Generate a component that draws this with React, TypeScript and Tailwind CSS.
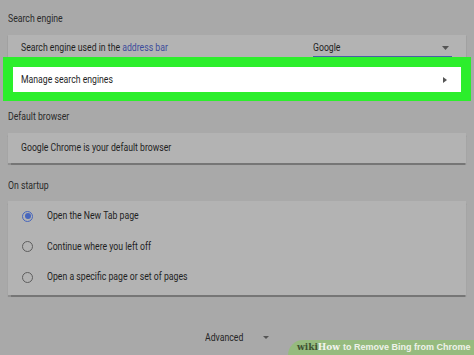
import React from "react";

const T = ({ children, className = "" }: { children: React.ReactNode; className?: string }) => (
  <span className={"inline-block origin-left scale-x-[0.79] whitespace-nowrap " + className}>{children}</span>
);

const Radio = ({ checked }: { checked?: boolean }) =>
  checked ? (
    <span className="flex h-[11px] w-[11px] items-center justify-center rounded-full border-[1.5px] border-[#4766bd]">
      <span className="h-[6px] w-[6px] rounded-full bg-[#4766bd]" />
    </span>
  ) : (
    <span className="h-[11px] w-[11px] rounded-full border-[1.5px] border-[#5e5e5e]" />
  );

export default function App() {
  return (
    <div
      className="relative h-[355px] w-[474px] overflow-hidden bg-[#a9a9a9] text-[11px] leading-[14px] text-[#1f1f1f]"
      style={{ fontFamily: "Roboto, 'Liberation Sans', sans-serif" }}
    >
      <div className="flex flex-col px-[8px] pt-[12px]">
        <div className="h-[14px] text-[#2a2a2a]">
          <T>Search engine</T>
        </div>
        <div className="mt-[9px] flex flex-col bg-[#b3b3b3] shadow-[0_1px_1px_rgba(0,0,0,0.25)]">
          <div className="flex h-[22px] items-stretch pl-[13px] pr-[14px]">
            <div className="flex items-center pt-[4px]">
              <T>
                Search engine used in the <span className="text-[#3d4c9c]">address bar</span>
              </T>
            </div>
            <div className="ml-auto flex w-[139px] items-center border-b border-[#4a5ea8] pt-[4px]">
              <T>Google</T>
              <svg className="ml-auto mr-[3px]" width="7" height="4" viewBox="0 0 7 4">
                <path d="M0 0h7L3.5 4z" fill="#555" />
              </svg>
            </div>
          </div>
          <div className="-mx-[5px] -mb-[4px] border-[10px] border-b-[9px] border-[#2cee2c]">
            <div className="flex h-[25px] items-center bg-white pl-[8px] pr-[14px]">
              <T>Manage search engines</T>
              <svg className="ml-auto" width="4" height="6" viewBox="0 0 4 6">
                <path d="M0 0l4 3-4 3z" fill="#555" />
              </svg>
            </div>
          </div>
        </div>

        <div className="mt-[13px] h-[14px] text-[#2a2a2a]">
          <T>Default browser</T>
        </div>
        <div className="mt-[9px] flex h-[30px] items-center bg-[#b3b3b3] pl-[13px] shadow-[0_1.5px_1px_rgba(0,0,0,0.3)]">
          <T>Google Chrome is your default browser</T>
        </div>

        <div className="mt-[16px] h-[14px] text-[#2a2a2a]">
          <T>On startup</T>
        </div>
        <div className="mt-[8px] flex flex-col bg-[#b3b3b3] pb-[2px] shadow-[0_1.5px_1px_rgba(0,0,0,0.3)]">
          {[
            ["Open the New Tab page", true],
            ["Continue where you left off", false],
            ["Open a specific page or set of pages", false],
          ].map(([label, checked]) => (
            <div key={label as string} className="flex h-[30.5px] items-center pl-[14px]">
              <Radio checked={checked as boolean} />
              <span className="ml-[14px]">
                <T>{label as string}</T>
              </span>
            </div>
          ))}
        </div>

        <div className="mt-[36px] flex h-[14px] items-center pl-[197px]">
          <span className="w-[46px]">
            <T className="text-[#262626]">Advanced</T>
          </span>
          <svg className="ml-[12px]" width="6" height="3" viewBox="0 0 6 3">
            <path d="M0 0h6L3 3z" fill="#555" />
          </svg>
        </div>
      </div>

      <div className="absolute bottom-0 right-0 flex h-[15px] w-[186px] items-center whitespace-nowrap rounded-tl-[16px] bg-[#96bb7f] pl-[9px] text-[9px] font-bold leading-none">
        <span className="text-[#3e5232]" style={{ fontFamily: "'DejaVu Serif', serif" }}>
          wiki
        </span>
        <span className="text-[#f2f4ee]" style={{ fontFamily: "'DejaVu Serif', serif" }}>
          How
        </span>
        <span className="ml-[3px] text-[#eef2ea]" style={{ fontFamily: "'Liberation Sans', sans-serif" }}>
          to Remove Bing from Chrome
        </span>
      </div>
    </div>
  );
}
